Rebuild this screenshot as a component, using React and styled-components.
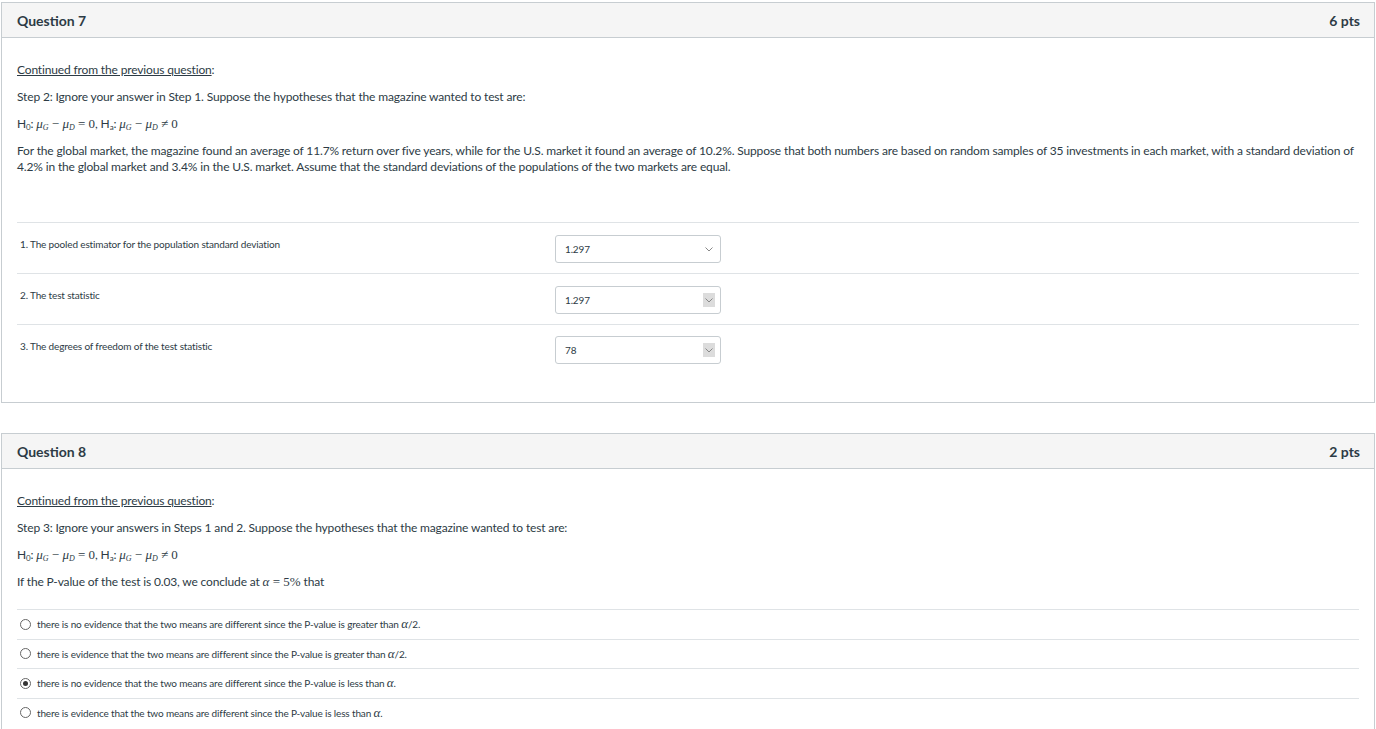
import React from "react";
import styled, { createGlobalStyle } from "styled-components";

const G = createGlobalStyle`
  body { margin: 0; background: #fff; font-family: Lato, "Open Sans", sans-serif; color: #2d3b45; }
`;
const Page = styled.div` padding: 2px 1px 0 1px; display: flex; flex-direction: column; gap: 30px; `;
const Card = styled.div` border: 1px solid #c7cdd1; `;
const Header = styled.div`
  background: #f5f5f5; border-bottom: 1px solid #c7cdd1; height: 34px;
  display: flex; align-items: center; justify-content: space-between; padding: 0 14px 0 15px;
  font-weight: 700; font-size: 14px; color: #2d3b45;
`;
const Body = styled.div` padding: ${p => p.$pt}px 15px ${p => p.$pb}px 15px; font-size: 12px; letter-spacing: -0.15px; `;
const P = styled.p` margin: 0 0 ${p => p.$mb ?? 11}px; line-height: 16px; `;
const U = styled.span` text-decoration: underline; `;
const M = styled.span` font-family: "Liberation Serif", serif; font-size: 13px; letter-spacing: 0; `;
const I = styled.i` font-family: "Liberation Serif", serif; font-size: 13px; `;
const Sub = styled.sub` font-size: 8px; line-height: 0; vertical-align: -2px; `;
const Table = styled.div` border-top: 1px solid #dfe3e6; margin-top: 47px; `;
const Row = styled.div`
  display: flex; height: 51px; border-bottom: ${p => p.$last ? "none" : "1px solid #dfe3e6"};
  padding: 11px 3px 0; box-sizing: border-box; font-size: 10px;
`;
const Label = styled.div` width: 535px; padding-top: 4px; `;
const Select = styled.div`
  width: 166px; height: 28px; border: 1px solid #c7cdd1; border-radius: 3px; box-sizing: border-box;
  display: flex; align-items: center; justify-content: space-between; padding: 0 5px 0 9px;
  margin-top: ${p => p.$mt}px; font-size: 10px;
`;
const Arrow = styled.span`
  width: 12px; height: 14px; display: flex; align-items: center; justify-content: center;
  background: ${p => p.$box ? "#dcdcdc" : "transparent"};
`;
const Opts = styled.div` border-top: 1px solid #dfe3e6; margin-top: 19px; `;
const Opt = styled.div`
  height: 28.5px; border-bottom: ${p => p.$last ? "none" : "1px solid #dfe3e6"};
  display: flex; align-items: center; gap: 6px; padding-left: 3px; font-size: 10px;
`;
const Radio = styled.span`
  width: 9px; height: 9px; border: 1px solid #666; border-radius: 50%; display: flex;
  align-items: center; justify-content: center;
  &::after { content: ""; width: 5px; height: 5px; border-radius: 50%; background: ${p => p.$on ? "#333" : "transparent"}; }
`;

const Chev = () => (
  <svg width="8" height="5" viewBox="0 0 8 5"><path d="M0.5 0.5L4 4L7.5 0.5" fill="none" stroke="#888" strokeWidth="1"/></svg>
);

const Hyp = () => (
  <P>H<Sub>0</Sub>: <M><I>μ<Sub>G</Sub></I> − <I>μ<Sub>D</Sub></I> = 0</M>, H<Sub>a</Sub>: <M><I>μ<Sub>G</Sub></I> − <I>μ<Sub>D</Sub></I> ≠ 0</M></P>
);

const rows = [
  ["1. The pooled estimator for the population standard deviation", "1.297", false],
  ["2. The test statistic", "1.297", true],
  ["3. The degrees of freedom of the test statistic", "78", true],
];
const opts = [
  ["there is no evidence that the two means are different since the P-value is greater than ", "/2.", false],
  ["there is evidence that the two means are different since the P-value is greater than ", "/2.", false],
  ["there is no evidence that the two means are different since the P-value is less than ", ".", true],
  ["there is evidence that the two means are different since the P-value is less than ", ".", false],
];

export default function App() {
  return (
    <Page>
      <G />
      <Card>
        <Header><span>Question 7</span><span>6 pts</span></Header>
        <Body $pt={24} $pb={26}>
          <P><U>Continued from the previous question</U>:</P>
          <P>Step 2: Ignore your answer in Step 1. Suppose the hypotheses that the magazine wanted to test are:</P>
          <Hyp />
          <P $mb={0}>For the global market, the magazine found an average of 11.7% return over five years, while for the U.S. market it found an average of 10.2%. Suppose that both numbers are based on random samples of 35 investments in each market, with a standard deviation of 4.2% in the global market and 3.4% in the U.S. market. Assume that the standard deviations of the populations of the two markets are equal.</P>
          <Table>
            {rows.map(([l, v, b], i) => (
              <Row key={i} $last={i === 2}>
                <Label>{l}</Label>
                <Select $mt={i === 2 ? 0 : 1}>{v}<Arrow $box={b}><Chev /></Arrow></Select>
              </Row>
            ))}
          </Table>
        </Body>
      </Card>
      <Card>
        <Header><span>Question 8</span><span>2 pts</span></Header>
        <Body $pt={24} $pb={12}>
          <P><U>Continued from the previous question</U>:</P>
          <P>Step 3: Ignore your answers in Steps 1 and 2. Suppose the hypotheses that the magazine wanted to test are:</P>
          <Hyp />
          <P $mb={0}>If the P-value of the test is 0.03, we conclude at <M><I>α</I> = 5%</M> that</P>
          <Opts>
            {opts.map(([t, s, on], i) => (
              <Opt key={i} $last={i === 3}><Radio $on={on} /><span>{t}<I>α</I>{s}</span></Opt>
            ))}
          </Opts>
        </Body>
      </Card>
    </Page>
  );
}
